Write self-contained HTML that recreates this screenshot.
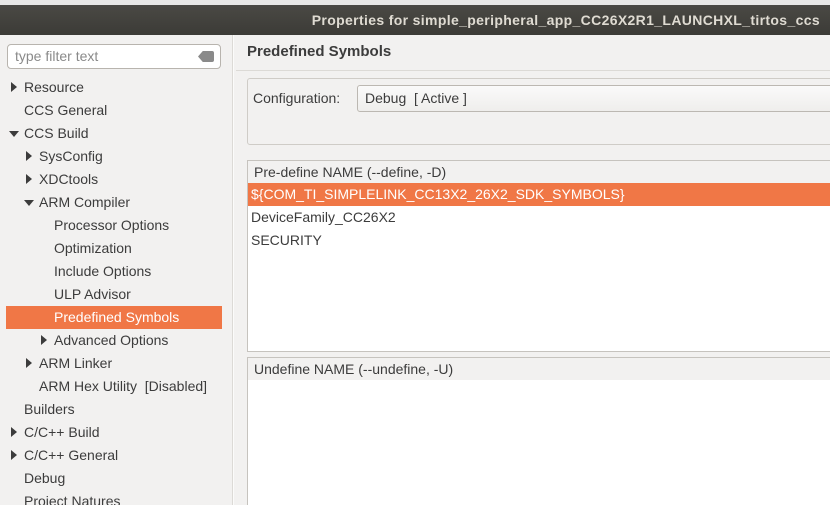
<!DOCTYPE html>
<html style="overflow:hidden;width:830px;height:505px"><head><style>
*{margin:0;padding:0;box-sizing:border-box}
body{width:830px;height:505px;overflow:hidden;background:#f2f1f0;font-family:"Liberation Sans",sans-serif;font-size:14px;color:#3c3c3c;position:relative}
.a{position:absolute}
.top{left:0;top:0;width:830px;height:5px;background:#e8e8e7}
.title{left:0;top:5px;width:830px;height:30px;background:linear-gradient(#4a4944,#3c3b37);color:#dfdbd2;font-weight:bold;font-size:14px;letter-spacing:0.35px;text-align:right;padding-right:10px;line-height:30px}
.filter{left:7px;top:44px;width:214px;height:25px;background:#fff;border:1px solid #b8b4ae;border-radius:4px;color:#8a8a8a;padding-left:7px;line-height:23px;font-size:14px}
.clr{right:6px;top:6px;width:16px;height:11px;background:#8a8a8a;border-radius:2px;clip-path:polygon(0 50%,30% 0,100% 0,100% 100%,30% 100%)}
.row{position:absolute;height:23px;line-height:23px;white-space:nowrap}
.tri{position:absolute;width:0;height:0;border-top:5px solid transparent;border-bottom:5px solid transparent;border-left:6px solid #3c3c3c;top:6px}
.trid{position:absolute;width:0;height:0;border-left:5px solid transparent;border-right:5px solid transparent;border-top:6px solid #3c3c3c;top:9px}
.sel{left:6px;top:306px;width:216px;height:23px;background:#f07746}
.div{left:232px;top:35px;width:2px;height:470px;background:#fbfbfa;border-left:1px solid #dcdad6}
</style></head><body>
<div class="a top"></div>
<div class="a title">Properties for simple_peripheral_app_CC26X2R1_LAUNCHXL_tirtos_ccs</div>
<div class="a filter">type filter text<div class="a clr"></div></div>
<div class="a sel"></div>
<div class="row" style="top:76px;left:24px"><span class="tri" style="left:-13px"></span>Resource</div>
<div class="row" style="top:99px;left:24px">CCS General</div>
<div class="row" style="top:122px;left:24px"><span class="trid" style="left:-15px"></span>CCS Build</div>
<div class="row" style="top:145px;left:39px"><span class="tri" style="left:-13px"></span>SysConfig</div>
<div class="row" style="top:168px;left:39px"><span class="tri" style="left:-13px"></span>XDCtools</div>
<div class="row" style="top:191px;left:39px"><span class="trid" style="left:-15px"></span>ARM Compiler</div>
<div class="row" style="top:214px;left:54px">Processor Options</div>
<div class="row" style="top:237px;left:54px">Optimization</div>
<div class="row" style="top:260px;left:54px">Include Options</div>
<div class="row" style="top:283px;left:54px">ULP Advisor</div>
<div class="row" style="top:306px;left:54px;color:#fff">Predefined Symbols</div>
<div class="row" style="top:329px;left:54px"><span class="tri" style="left:-13px"></span>Advanced Options</div>
<div class="row" style="top:352px;left:39px"><span class="tri" style="left:-13px"></span>ARM Linker</div>
<div class="row" style="top:375px;left:39px">ARM Hex Utility&nbsp; [Disabled]</div>
<div class="row" style="top:398px;left:24px">Builders</div>
<div class="row" style="top:421px;left:24px"><span class="tri" style="left:-13px"></span>C/C++ Build</div>
<div class="row" style="top:444px;left:24px"><span class="tri" style="left:-13px"></span>C/C++ General</div>
<div class="row" style="top:467px;left:24px">Debug</div>
<div class="row" style="top:490px;left:24px">Project Natures</div>
<div class="a div"></div>
<div class="a" style="left:247px;top:43px;font-weight:bold;font-size:15px;color:#3c3c3c">Predefined Symbols</div>
<div class="a" style="left:236px;top:70px;width:594px;height:1px;background:#dcdad6"></div>
<div class="a" style="left:247px;top:78px;width:590px;height:67px;border:1px solid #cfccc7;border-radius:3px"></div>
<div class="a" style="left:253px;top:90px">Configuration:</div>
<div class="a" style="left:357px;top:85px;width:480px;height:27px;border:1px solid #bcb8b2;border-radius:3px;background:linear-gradient(#fafafa,#efeeec);padding-left:7px;line-height:25px">Debug&nbsp; [ Active ]</div>
<div class="a" style="left:247px;top:160px;width:590px;height:192px;border:1px solid #c6c3be;background:#fff"></div>
<div class="a" style="left:248px;top:161px;width:590px;height:22px;background:#f2f1f0;padding-left:6px;line-height:22px">Pre-define NAME (--define, -D)</div>
<div class="a" style="left:248px;top:183px;width:590px;height:23px;background:#f07746;color:#fff;padding-left:3px;line-height:23px">${COM_TI_SIMPLELINK_CC13X2_26X2_SDK_SYMBOLS}</div>
<div class="a" style="left:251px;top:206px;line-height:23px">DeviceFamily_CC26X2</div>
<div class="a" style="left:251px;top:229px;line-height:23px">SECURITY</div>
<div class="a" style="left:247px;top:357px;width:590px;height:148px;border:1px solid #c6c3be;border-bottom:none;background:#fff"></div>
<div class="a" style="left:248px;top:358px;width:590px;height:22px;background:#f2f1f0;padding-left:6px;line-height:22px">Undefine NAME (--undefine, -U)</div>
</body></html>
